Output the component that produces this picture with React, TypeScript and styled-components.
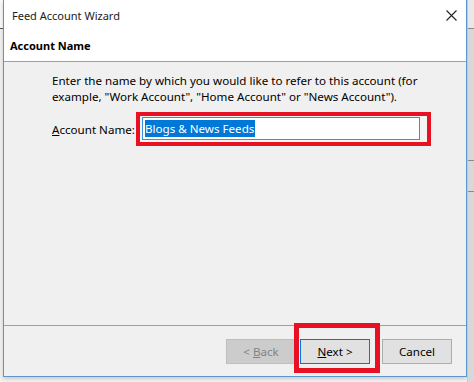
import React from 'react'
import styled, { createGlobalStyle } from 'styled-components'

const Global = createGlobalStyle`
  html, body {
    margin: 0;
    padding: 0;
    background: #f4f4f4;
  }
  body {
    font-family: 'Noto Sans', 'Open Sans', sans-serif;
    font-size: 11.6px;
    color: #000;
  }
`

const Screen = styled.div`
  display: flex;
  width: 474px;
  height: 382px;
  overflow: hidden;
`

const BackdropLeft = styled.div`
  width: 3px;
  background: linear-gradient(#fafafa 0 28px, #555 28px 29px, #f2f2f2 29px);
`

const BackdropRight = styled.div`
  flex: 1;
  background: #dcdcdc;
  border-left: 1px solid #c8c8c8;
  background-image: linear-gradient(
    #e8e8e8 0 28px,
    #8a8a8a 28px 29px,
    #d8d8d8 29px 160px,
    #8a8a8a 160px 161px,
    #d8d8d8 161px 191px,
    #8a8a8a 191px 192px,
    #d8d8d8 192px
  );
`

const Window = styled.div`
  display: flex;
  flex-direction: column;
  width: 462px;
  height: 376px;
  border: 1px solid #5b96cf;
  border-top: none;
  background: #f0f0f0;
  box-shadow: 0 2px 4px rgba(0, 0, 0, 0.18);
`

const TitleBar = styled.div`
  display: flex;
  align-items: center;
  height: 30px;
  padding: 0 9px 0 8px;
  background: #fff;
  font-size: 11px;
  color: #1a1a1a;
`

const Title = styled.span`
  flex: 1;
`

const CloseButton = styled.span`
  display: flex;
  align-items: center;
  justify-content: center;
  width: 12px;
  height: 12px;
`

const Header = styled.div`
  display: flex;
  align-items: center;
  height: 31px;
  padding-left: 6px;
  background: #fff;
  border-bottom: 1px solid #a0a0a0;
  font-weight: 700;
  font-size: 11px;
`

const Body = styled.div`
  flex: 1;
  display: flex;
  flex-direction: column;
  padding: 11px 20px 0 48px;
`

const Intro = styled.p`
  margin: 0;
  line-height: 16px;
`

const FieldRow = styled.div`
  display: flex;
  align-items: center;
  margin-top: 7px;
`

const Label = styled.label`
  width: 84px;
  white-space: nowrap;
`

const Key = styled.span`
  text-decoration: underline;
`

const Highlight = styled.div`
  display: flex;
  align-items: center;
  width: 278px;
  height: 23px;
  padding: 1px 7px 2px 2px;
  border: 4px solid #e81123;
  background: #f4f4f4;
`

const TextBox = styled.div`
  flex: 1;
  display: flex;
  align-items: center;
  height: 21px;
  padding: 0 2px;
  border: 1px solid #3d8ee0;
  background: #fff;
`

const Selected = styled.span`
  background: #0078d7;
  color: #fff;
  line-height: 17px;
  padding-right: 1px;
`

const Footer = styled.div`
  display: flex;
  justify-content: flex-end;
  align-items: flex-start;
  height: 51px;
  padding: 13px 14px 0 0;
  border-top: 1px solid #a0a0a0;
  box-sizing: border-box;
`

const Button = styled.button<{ $variant?: 'default' | 'disabled' }>`
  width: 70px;
  height: 25px;
  margin-left: ${p => (p.$variant === 'default' ? '4px' : '12px')};
  font-family: inherit;
  font-size: 11.6px;
  padding: 0;
  background: ${p => (p.$variant === 'disabled' ? '#cccccc' : '#e1e1e1')};
  color: ${p => (p.$variant === 'disabled' ? '#838383' : '#000')};
  border: 1px solid
    ${p =>
      p.$variant === 'default'
        ? '#0078d7'
        : p.$variant === 'disabled'
        ? '#bfbfbf'
        : '#adadad'};
  &:first-child {
    margin-left: 0;
  }
`

const Marked = styled.div`
  position: relative;
  margin-left: 4px;
  &::after {
    content: '';
    position: absolute;
    left: -6px;
    right: -10px;
    top: -16px;
    bottom: -9px;
    border: 5px solid #e81123;
    pointer-events: none;
  }
  & > button {
    margin-left: 0;
  }
`

export default function App() {
  return (
    <>
      <Global />
      <Screen>
        <BackdropLeft />
        <Window>
          <TitleBar>
            <Title>Feed Account Wizard</Title>
            <CloseButton>
              <svg width="11" height="11" viewBox="0 0 11 11">
                <path d="M0.5 0.5 L10.5 10.5 M10.5 0.5 L0.5 10.5" stroke="#222" strokeWidth="1.1" />
              </svg>
            </CloseButton>
          </TitleBar>
          <Header>Account Name</Header>
          <Body>
            <Intro>
              Enter the name by which you would like to refer to this account (for
              <br />
              example, "Work Account", "Home Account" or "News Account").
            </Intro>
            <FieldRow>
              <Label>
                <Key>A</Key>ccount Name:
              </Label>
              <Highlight>
                <TextBox>
                  <Selected>Blogs &amp; News Feeds</Selected>
                </TextBox>
              </Highlight>
            </FieldRow>
          </Body>
          <Footer>
            <Button $variant="disabled">
              &lt; <Key>B</Key>ack
            </Button>
            <Marked>
              <Button $variant="default">
                <Key>N</Key>ext &gt;
              </Button>
            </Marked>
            <Button>Cancel</Button>
          </Footer>
        </Window>
        <BackdropRight />
      </Screen>
    </>
  )
}
